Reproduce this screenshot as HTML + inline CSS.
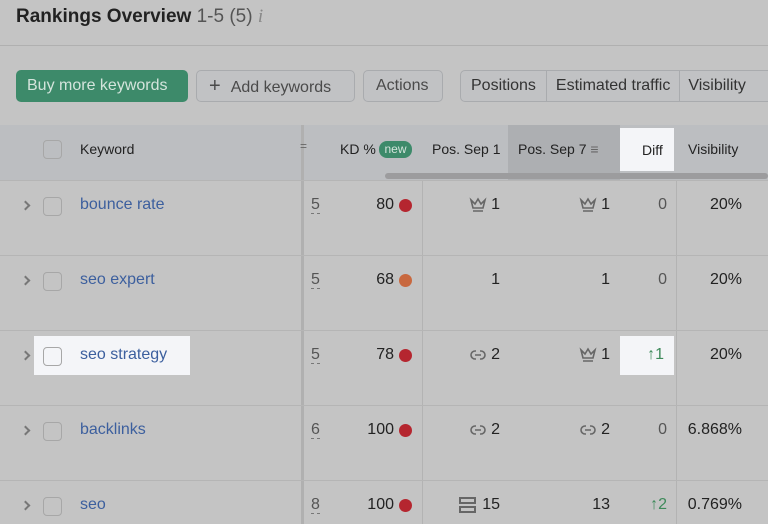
<html><head><style>
*{margin:0;padding:0;box-sizing:border-box}
body{width:768px;height:524px;overflow:hidden;background:#c4c4c4;font-family:"Liberation Sans",sans-serif;position:relative;color:#222}
.a{position:absolute}
.t{font-size:15px;white-space:nowrap}
.btn{position:absolute;top:70px;height:32px;border:1px solid #a9abae;border-radius:5px;font-size:16px;line-height:30px;color:#4a4a4a;padding:0 12px;background:#c1c2c4;white-space:nowrap}
.cb{position:absolute;width:19px;height:19px;border:1.5px solid #a7a7a7;border-radius:4px}
.chev{position:absolute;left:22px;width:7px;height:7px;border-right:2px solid #777;border-top:2px solid #777;transform:rotate(45deg)}
.kw{position:absolute;left:80px;font-size:16px;color:#3c5f9e}
.r{position:absolute;text-align:right;font-size:16px;white-space:nowrap;display:flex;align-items:center;gap:4px}
.hl{position:absolute;background:#f4f5f8}
.dot{position:absolute;width:13px;height:13px;border-radius:50%}
.vl{position:absolute;top:125px;bottom:0;width:1px;background:#b3b3b3}
.hr{position:absolute;left:0;right:0;height:1px;background:#b5b5b5}
.pn{position:absolute;left:311px;font-size:16px;color:#555;border-bottom:1px dashed #777;line-height:16px}
svg{fill:none;stroke:#666;stroke-width:1.6}
</style></head><body>
<div class="a" style="left:16px;top:6px;font-size:19px;font-weight:bold;color:#222">Rankings Overview <span style="font-weight:normal;color:#555">1-5 (5)</span> <span style="font-weight:normal;font-style:italic;color:#888;font-family:'Liberation Serif'">i</span></div>
<div class="hr" style="top:45px;background:#b0b0b0"></div>
<div class="btn" style="left:16px;width:172px;background:#3d8a6a;border-color:#3d8a6a;color:#d4e4dc;padding:0 10px">Buy more keywords</div>
<div class="btn" style="left:196px;width:159px"><span style="font-size:20px;margin-right:10px">+</span>Add keywords</div>
<div class="btn" style="left:363px;width:80px">Actions</div>
<div class="btn" style="left:460px;width:330px;padding:0;color:#333;display:flex">
<span style="padding:0 10px;border-right:1px solid #a9abae">Positions</span><span style="padding:0 9px;border-right:1px solid #a9abae">Estimated traffic</span><span style="padding:0 8px">Visibility</span></div>
<div class="a" style="left:0;top:125px;width:768px;height:55px;background:#bcbec1"></div>
<div class="a" style="left:508px;top:125px;width:112px;height:55px;background:#adafb2"></div>
<div class="hl" style="left:620px;top:128px;width:54px;height:43px"></div>
<div class="a" style="left:385px;top:173px;width:383px;height:6px;border-radius:3px;background:#9c9c9e"></div>
<div class="a" style="left:301px;top:125px;width:3px;bottom:0;background:#b0b0b0"></div>
<div class="vl" style="left:422px;top:180px"></div>
<div class="vl" style="left:676px;top:180px"></div>
<div class="cb" style="left:43px;top:140px"></div>
<div class="a t" style="left:80px;top:141px;font-size:14px">Keyword</div>
<div class="a t" style="left:300px;top:139px;font-size:12px;color:#666">=</div>
<div class="a t" style="left:340px;top:141px;font-size:14px">KD %</div>
<div class="a" style="left:379px;top:141px;width:33px;height:17px;border-radius:8px;background:#3d8a6a;color:#d4e4dc;font-size:12px;text-align:center;line-height:16px">new</div>
<div class="a t" style="left:432px;top:141px;font-size:14px">Pos. Sep 1</div>
<div class="a t" style="left:518px;top:141px;font-size:14px">Pos. Sep 7 <span style="color:#666">&#8801;</span></div>
<div class="a t" style="left:642px;top:142px;font-size:14px">Diff</div>
<div class="a t" style="left:688px;top:141px;font-size:14px">Visibility</div>
<div class="hr" style="top:180px"></div>
<div class="hr" style="top:255px"></div>
<div class="hr" style="top:330px"></div>
<div class="hr" style="top:405px"></div>
<div class="hr" style="top:480px"></div>
<div class="hl" style="left:34px;top:336px;width:156px;height:39px"></div>
<div class="hl" style="left:620px;top:336px;width:54px;height:39px"></div>

<div class="chev" style="top:202px"></div><div class="cb" style="left:43px;top:197px"></div><div class="kw" style="top:196px">bounce rate</div>
<div class="pn" style="top:197px">5</div><div class="r" style="right:374px;top:196px">80</div><div class="dot" style="left:399px;top:199px;background:#b5262f"></div>
<div class="r" style="right:268px;top:196px"><svg width="18" height="16" viewBox="0 0 18 16"><path d="M2 3l4 4 3-5 3 5 4-4-2 8H4z M4 14h10"/></svg>1</div><div class="r" style="right:158px;top:196px"><svg width="18" height="16" viewBox="0 0 18 16"><path d="M2 3l4 4 3-5 3 5 4-4-2 8H4z M4 14h10"/></svg>1</div>
<div class="r" style="right:101px;top:196px;color:#555">0</div><div class="r" style="right:26px;top:196px">20%</div>

<div class="chev" style="top:277px"></div><div class="cb" style="left:43px;top:272px"></div><div class="kw" style="top:271px">seo expert</div>
<div class="pn" style="top:272px">5</div><div class="r" style="right:374px;top:271px">68</div><div class="dot" style="left:399px;top:274px;background:#c8683f"></div>
<div class="r" style="right:268px;top:271px">1</div><div class="r" style="right:158px;top:271px">1</div>
<div class="r" style="right:101px;top:271px;color:#555">0</div><div class="r" style="right:26px;top:271px">20%</div>

<div class="chev" style="top:352px"></div><div class="cb" style="left:43px;top:347px"></div><div class="kw" style="top:346px">seo strategy</div>
<div class="pn" style="top:347px">5</div><div class="r" style="right:374px;top:346px">78</div><div class="dot" style="left:399px;top:349px;background:#b5262f"></div>
<div class="r" style="right:268px;top:346px"><svg width="18" height="16" viewBox="0 0 18 16"><path d="M7 4H6a4 4 0 0 0 0 8h1 M11 4h1a4 4 0 0 1 0 8h-1 M6 8h6"/></svg>2</div><div class="r" style="right:158px;top:346px"><svg width="18" height="16" viewBox="0 0 18 16"><path d="M2 3l4 4 3-5 3 5 4-4-2 8H4z M4 14h10"/></svg>1</div>
<div class="r" style="right:104px;top:346px;color:#3d8a5a">&#8593;1</div><div class="r" style="right:26px;top:346px">20%</div>

<div class="chev" style="top:427px"></div><div class="cb" style="left:43px;top:422px"></div><div class="kw" style="top:421px">backlinks</div>
<div class="pn" style="top:422px">6</div><div class="r" style="right:374px;top:421px">100</div><div class="dot" style="left:399px;top:424px;background:#b5262f"></div>
<div class="r" style="right:268px;top:421px"><svg width="18" height="16" viewBox="0 0 18 16"><path d="M7 4H6a4 4 0 0 0 0 8h1 M11 4h1a4 4 0 0 1 0 8h-1 M6 8h6"/></svg>2</div><div class="r" style="right:158px;top:421px"><svg width="18" height="16" viewBox="0 0 18 16"><path d="M7 4H6a4 4 0 0 0 0 8h1 M11 4h1a4 4 0 0 1 0 8h-1 M6 8h6"/></svg>2</div>
<div class="r" style="right:101px;top:421px;color:#555">0</div><div class="r" style="right:26px;top:421px">6.868%</div>

<div class="chev" style="top:502px"></div><div class="cb" style="left:43px;top:497px"></div><div class="kw" style="top:496px">seo</div>
<div class="pn" style="top:497px">8</div><div class="r" style="right:374px;top:496px">100</div><div class="dot" style="left:399px;top:499px;background:#b5262f"></div>
<div class="r" style="right:268px;top:496px"><svg width="20" height="18" viewBox="0 0 20 18"><path d="M2 2h15v5H2z M2 11h15v5H2z" style="stroke-width:2"/></svg>15</div><div class="r" style="right:158px;top:496px">13</div>
<div class="r" style="right:101px;top:496px;color:#3d8a5a">&#8593;2</div><div class="r" style="right:26px;top:496px">0.769%</div>
</body></html>
